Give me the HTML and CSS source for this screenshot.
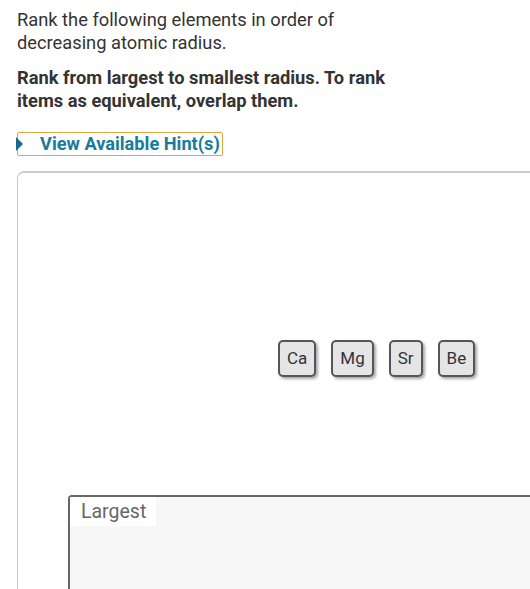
FILE: index.html
```html
<!DOCTYPE html>
<html>
<head>
<meta charset="utf-8">
<link rel="stylesheet" href="styles.css">
</head>
<body>
<div class="page">
  <p class="intro">Rank the following elements in order of decreasing atomic radius.</p>
  <p class="instr">Rank from largest to smallest radius. To rank items as equivalent, overlap them.</p>
  <div class="hint-row">
    <button class="hint"><span class="tri"></span><span class="hint-text">View Available Hint(s)</span></button>
  </div>
  <div class="workspace">
    <div class="tiles">
      <div class="tile">Ca</div>
      <div class="tile">Mg</div>
      <div class="tile">Sr</div>
      <div class="tile">Be</div>
    </div>
    <div class="target">
      <div class="label">Largest</div>
    </div>
  </div>
</div>
</body>
</html>
```

FILE: styles.css
```css
html, body {
  margin: 0;
  padding: 0;
  background: #ffffff;
  overflow: hidden;
}
.page {
  padding: 8px 0 0 17px;
  font-family: Roboto, "Noto Sans", sans-serif;
  color: #333333;
  height: 589px;
  box-sizing: border-box;
}
.intro, .instr {
  margin: 0;
  font-size: 18.3px;
  line-height: 23px;
  width: 400px;
}
.instr {
  margin-top: 12px;
  font-weight: 700;
}
.hint-row {
  margin-top: 20px;
  display: flex;
}
.hint {
  display: flex;
  align-items: center;
  height: 24px;
  padding: 0 2px 0 0;
  margin: 0;
  border: 1px solid #e4a53a;
  border-radius: 2px;
  background: #fff;
  font-family: Roboto, "Noto Sans", sans-serif;
  cursor: pointer;
}
.tri {
  width: 0;
  height: 0;
  border-top: 7px solid transparent;
  border-bottom: 7px solid transparent;
  border-left: 7px solid #1a6a8c;
  margin-left: -2px;
  margin-right: 17px;
}
.hint-text {
  font-size: 18.2px;
  font-weight: 700;
  color: #177c9c;
  line-height: 22px;
}
.workspace {
  margin-top: 15px;
  border: 1px solid #c9c9c9;
  border-top: 2px solid #cdcdcd;
  border-right: none;
  border-radius: 7px 0 0 0;
  height: 420px;
  display: flex;
  flex-direction: column;
}
.tiles {
  display: flex;
  gap: 15px;
  padding: 167px 0 0 260px;
}
.tile {
  box-sizing: border-box;
  height: 37px;
  padding: 0 7px;
  border: 2px solid #555555;
  border-radius: 5px;
  background: #e5e5e8;
  box-shadow: 2px 2px 3px rgba(0,0,0,0.35);
  font-size: 17px;
  line-height: 33px;
  color: #333;
}
.target {
  margin: 118px 0 0 50px;
  flex: 1;
  border: 2px solid #666666;
  border-right: none;
  border-bottom: none;
  border-radius: 4px 0 0 0;
  background: #f7f7f8;
}
.label {
  display: inline-block;
  background: #ffffff;
  color: #666666;
  font-size: 19.5px;
  line-height: 29px;
  padding: 0 10px 0 11px;
}
```
